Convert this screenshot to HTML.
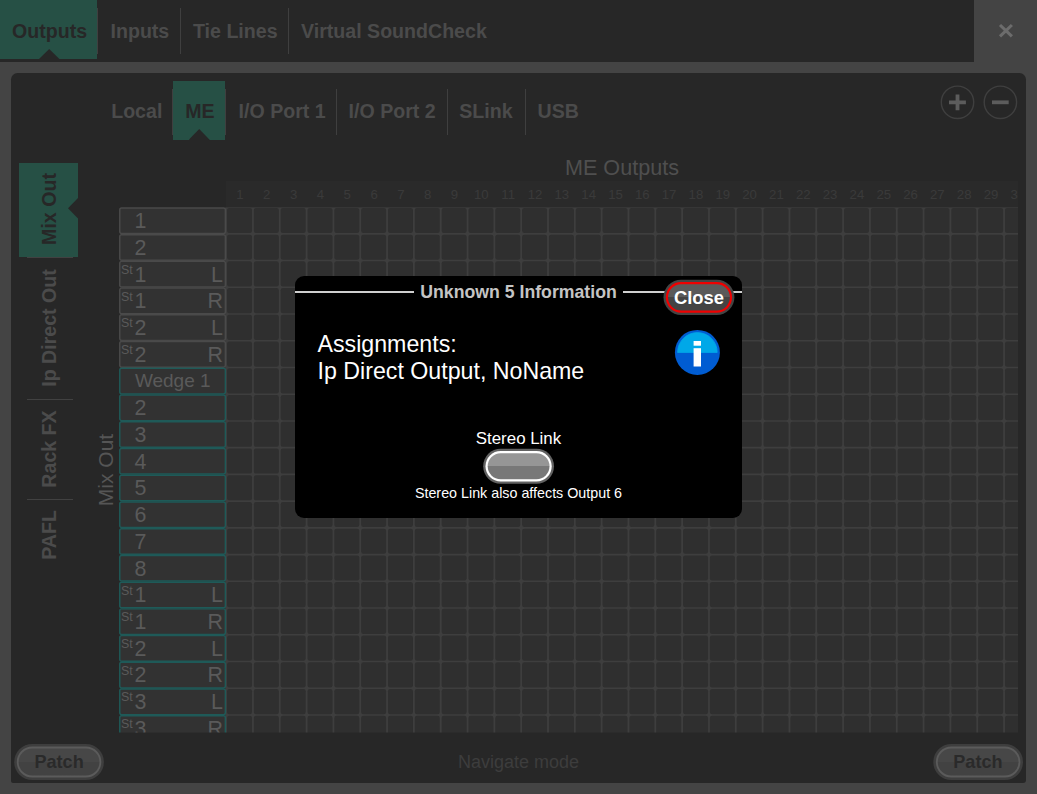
<!DOCTYPE html>
<html>
<head>
<meta charset="utf-8">
<title>I/O Patch</title>
<style>
html,body{margin:0;padding:0;}
body{width:1037px;height:794px;overflow:hidden;background:#444444;font-family:"Liberation Sans",sans-serif;position:relative;}
.abs{position:absolute;}
#nav{position:absolute;left:0;top:0;width:974px;height:62px;background:#272727;}
.tab{position:absolute;top:0;height:59px;line-height:62.2px;font-weight:bold;font-size:19.6px;color:#4b4b4b;white-space:nowrap;}
.tab.on{background:#265045;color:#272727;}
.vsep{position:absolute;width:1px;background:#3f3f3f;}
#panel{position:absolute;left:11px;top:73px;width:1015px;height:709.5px;background:#272727;border-radius:6.5px 6.5px 3px 2px;}
.stab{position:absolute;top:81px;height:58.6px;line-height:61.6px;font-weight:bold;font-size:19.6px;color:#4b4b4b;white-space:nowrap;}
.stab.on{background:#265045;color:#272727;}
.vt{position:absolute;left:19px;width:58.5px;font-weight:bold;font-size:19.6px;color:#4b4b4b;white-space:nowrap;}
.vt span{position:absolute;left:calc(50% + 1.0px);top:50%;transform:translate(-50%,-50%) rotate(-90deg);display:block;}
.vt.on{background:#265045;color:#272727;}
.hsep{position:absolute;height:1px;background:#414141;}
#gridclip{position:absolute;left:119px;top:181px;width:899px;height:552px;overflow:hidden;}
#hdr{position:absolute;left:107px;top:0;width:800px;height:26.4px;background:#2a2a2a;}
#gsvg{position:absolute;left:0;top:0;}
#modal{position:absolute;left:295px;top:276px;width:447px;height:241.5px;background:#000;border-radius:9px;color:#fff;}
.ptxt{top:744px;width:89.5px;height:35.6px;line-height:37.4px;text-align:center;font-weight:bold;font-size:18.1px;color:#2a2a2a;}
</style>
</head>
<body>
<div id="nav">
  <div class="tab on" style="left:0;width:97px;"><span style="margin-left:12px">Outputs</span>
    <svg class="abs" style="left:39px;top:49px" width="21" height="10"><path d="M0 10 L10.2 0 L20.4 10Z" fill="#272727"/></svg></div>
  <div class="vsep" style="left:97px;top:8px;height:46px;"></div>
  <div class="tab" style="left:110.5px;">Inputs</div>
  <div class="vsep" style="left:180px;top:8px;height:46px;"></div>
  <div class="tab" style="left:193px;">Tie Lines</div>
  <div class="vsep" style="left:288px;top:8px;height:46px;"></div>
  <div class="tab" style="left:301px;">Virtual SoundCheck</div>
</div>
<svg class="abs" style="left:996px;top:20px" width="20" height="20"><path d="M4 5 L15.9 16.4 M15.9 5 L4 16.4" stroke="#6c6c6c" stroke-width="3.1" fill="none"/></svg>

<div id="panel"></div>

<div class="stab" style="left:111.2px;">Local</div>
<div class="vsep" style="left:172.2px;top:89px;height:46px;"></div>
<div class="vsep" style="left:225px;top:89px;height:46px;"></div>
<div class="stab on" style="left:173.2px;width:50.4px;padding-left:1.5px;text-align:center;">ME
  <svg class="abs" style="left:16.3px;top:48.4px" width="21" height="12"><path d="M0 10.4 L10.2 0 L20.4 10.4 V12 H0Z" fill="#272727"/></svg></div>
<div class="stab" style="left:238.6px;">I/O Port 1</div>
<div class="vsep" style="left:336px;top:89px;height:46px;"></div>
<div class="stab" style="left:348.6px;">I/O Port 2</div>
<div class="vsep" style="left:447px;top:89px;height:46px;"></div>
<div class="stab" style="left:459.2px;">SLink</div>
<div class="vsep" style="left:525px;top:89px;height:46px;"></div>
<div class="stab" style="left:537.6px;">USB</div>

<svg class="abs" style="left:939px;top:84px" width="80" height="36">
  <circle cx="18.5" cy="18.3" r="16.2" fill="none" stroke="#3f3f3f" stroke-width="1.4"/>
  <path d="M10 18.3 H26.9 M18.5 10.4 V26.3" stroke="#5c5c5c" stroke-width="3.8" fill="none"/>
  <circle cx="61.4" cy="18.3" r="16.2" fill="none" stroke="#3f3f3f" stroke-width="1.4"/>
  <path d="M53 18.3 H69.7" stroke="#5c5c5c" stroke-width="3.8" fill="none"/>
</svg>

<div class="vt on" style="top:163px;height:94px;"><span style="top:calc(50% - 0.8px)">Mix Out</span>
  <svg class="abs" style="left:48.5px;top:35px" width="10" height="21"><path d="M10 0 L0 10.2 L10 20.4Z" fill="#272727"/></svg></div>
<div class="hsep" style="left:27px;top:257px;width:46px;"></div>
<div class="vt" style="top:257px;height:142px;"><span>Ip Direct Out</span></div>
<div class="hsep" style="left:27px;top:399px;width:46px;"></div>
<div class="vt" style="top:399px;height:100px;"><span>Rack FX</span></div>
<div class="hsep" style="left:27px;top:499px;width:46px;"></div>
<div class="vt" style="top:499px;height:72px;"><span>PAFL</span></div>

<div class="abs" style="left:105.5px;top:469.5px;width:0;height:0;"><span style="position:absolute;left:0;top:0;transform:translate(-50%,-50%) rotate(-90deg);white-space:nowrap;font-size:21px;color:#555555;">Mix Out</span></div>

<div class="abs" style="left:226px;top:155.4px;width:792px;text-align:center;font-size:21.6px;color:#4f4f4f;line-height:26px;">ME Outputs</div>

<div id="gridclip">
  <div id="hdr"></div>
  <svg id="gsvg" width="960" height="600" font-family="Liberation Sans, sans-serif" font-size="21.4" fill="#5a5a5a">
<rect x="106.22" y="26.30" width="900" height="600" fill="#3e3e3e"/>
<g fill="#2f2f2f">
<rect x="108.02" y="26.90" width="25.02" height="25.13" rx="2.2"/>
<rect x="134.84" y="26.90" width="25.02" height="25.13" rx="2.2"/>
<rect x="161.66" y="26.90" width="25.02" height="25.13" rx="2.2"/>
<rect x="188.49" y="26.90" width="25.02" height="25.13" rx="2.2"/>
<rect x="215.31" y="26.90" width="25.02" height="25.13" rx="2.2"/>
<rect x="242.14" y="26.90" width="25.02" height="25.13" rx="2.2"/>
<rect x="268.96" y="26.90" width="25.02" height="25.13" rx="2.2"/>
<rect x="295.79" y="26.90" width="25.02" height="25.13" rx="2.2"/>
<rect x="322.62" y="26.90" width="25.02" height="25.13" rx="2.2"/>
<rect x="349.44" y="26.90" width="25.02" height="25.13" rx="2.2"/>
<rect x="376.26" y="26.90" width="25.02" height="25.13" rx="2.2"/>
<rect x="403.09" y="26.90" width="25.02" height="25.13" rx="2.2"/>
<rect x="429.91" y="26.90" width="25.02" height="25.13" rx="2.2"/>
<rect x="456.74" y="26.90" width="25.02" height="25.13" rx="2.2"/>
<rect x="483.56" y="26.90" width="25.02" height="25.13" rx="2.2"/>
<rect x="510.39" y="26.90" width="25.02" height="25.13" rx="2.2"/>
<rect x="537.22" y="26.90" width="25.02" height="25.13" rx="2.2"/>
<rect x="564.04" y="26.90" width="25.02" height="25.13" rx="2.2"/>
<rect x="590.86" y="26.90" width="25.02" height="25.13" rx="2.2"/>
<rect x="617.69" y="26.90" width="25.02" height="25.13" rx="2.2"/>
<rect x="644.51" y="26.90" width="25.02" height="25.13" rx="2.2"/>
<rect x="671.34" y="26.90" width="25.02" height="25.13" rx="2.2"/>
<rect x="698.16" y="26.90" width="25.02" height="25.13" rx="2.2"/>
<rect x="724.99" y="26.90" width="25.02" height="25.13" rx="2.2"/>
<rect x="751.81" y="26.90" width="25.02" height="25.13" rx="2.2"/>
<rect x="778.64" y="26.90" width="25.02" height="25.13" rx="2.2"/>
<rect x="805.46" y="26.90" width="25.02" height="25.13" rx="2.2"/>
<rect x="832.29" y="26.90" width="25.02" height="25.13" rx="2.2"/>
<rect x="859.12" y="26.90" width="25.02" height="25.13" rx="2.2"/>
<rect x="885.94" y="26.90" width="25.02" height="25.13" rx="2.2"/>
<rect x="912.77" y="26.90" width="25.02" height="25.13" rx="2.2"/>
<rect x="108.02" y="53.63" width="25.02" height="25.13" rx="2.2"/>
<rect x="134.84" y="53.63" width="25.02" height="25.13" rx="2.2"/>
<rect x="161.66" y="53.63" width="25.02" height="25.13" rx="2.2"/>
<rect x="188.49" y="53.63" width="25.02" height="25.13" rx="2.2"/>
<rect x="215.31" y="53.63" width="25.02" height="25.13" rx="2.2"/>
<rect x="242.14" y="53.63" width="25.02" height="25.13" rx="2.2"/>
<rect x="268.96" y="53.63" width="25.02" height="25.13" rx="2.2"/>
<rect x="295.79" y="53.63" width="25.02" height="25.13" rx="2.2"/>
<rect x="322.62" y="53.63" width="25.02" height="25.13" rx="2.2"/>
<rect x="349.44" y="53.63" width="25.02" height="25.13" rx="2.2"/>
<rect x="376.26" y="53.63" width="25.02" height="25.13" rx="2.2"/>
<rect x="403.09" y="53.63" width="25.02" height="25.13" rx="2.2"/>
<rect x="429.91" y="53.63" width="25.02" height="25.13" rx="2.2"/>
<rect x="456.74" y="53.63" width="25.02" height="25.13" rx="2.2"/>
<rect x="483.56" y="53.63" width="25.02" height="25.13" rx="2.2"/>
<rect x="510.39" y="53.63" width="25.02" height="25.13" rx="2.2"/>
<rect x="537.22" y="53.63" width="25.02" height="25.13" rx="2.2"/>
<rect x="564.04" y="53.63" width="25.02" height="25.13" rx="2.2"/>
<rect x="590.86" y="53.63" width="25.02" height="25.13" rx="2.2"/>
<rect x="617.69" y="53.63" width="25.02" height="25.13" rx="2.2"/>
<rect x="644.51" y="53.63" width="25.02" height="25.13" rx="2.2"/>
<rect x="671.34" y="53.63" width="25.02" height="25.13" rx="2.2"/>
<rect x="698.16" y="53.63" width="25.02" height="25.13" rx="2.2"/>
<rect x="724.99" y="53.63" width="25.02" height="25.13" rx="2.2"/>
<rect x="751.81" y="53.63" width="25.02" height="25.13" rx="2.2"/>
<rect x="778.64" y="53.63" width="25.02" height="25.13" rx="2.2"/>
<rect x="805.46" y="53.63" width="25.02" height="25.13" rx="2.2"/>
<rect x="832.29" y="53.63" width="25.02" height="25.13" rx="2.2"/>
<rect x="859.12" y="53.63" width="25.02" height="25.13" rx="2.2"/>
<rect x="885.94" y="53.63" width="25.02" height="25.13" rx="2.2"/>
<rect x="912.77" y="53.63" width="25.02" height="25.13" rx="2.2"/>
<rect x="108.02" y="80.36" width="25.02" height="25.13" rx="2.2"/>
<rect x="134.84" y="80.36" width="25.02" height="25.13" rx="2.2"/>
<rect x="161.66" y="80.36" width="25.02" height="25.13" rx="2.2"/>
<rect x="188.49" y="80.36" width="25.02" height="25.13" rx="2.2"/>
<rect x="215.31" y="80.36" width="25.02" height="25.13" rx="2.2"/>
<rect x="242.14" y="80.36" width="25.02" height="25.13" rx="2.2"/>
<rect x="268.96" y="80.36" width="25.02" height="25.13" rx="2.2"/>
<rect x="295.79" y="80.36" width="25.02" height="25.13" rx="2.2"/>
<rect x="322.62" y="80.36" width="25.02" height="25.13" rx="2.2"/>
<rect x="349.44" y="80.36" width="25.02" height="25.13" rx="2.2"/>
<rect x="376.26" y="80.36" width="25.02" height="25.13" rx="2.2"/>
<rect x="403.09" y="80.36" width="25.02" height="25.13" rx="2.2"/>
<rect x="429.91" y="80.36" width="25.02" height="25.13" rx="2.2"/>
<rect x="456.74" y="80.36" width="25.02" height="25.13" rx="2.2"/>
<rect x="483.56" y="80.36" width="25.02" height="25.13" rx="2.2"/>
<rect x="510.39" y="80.36" width="25.02" height="25.13" rx="2.2"/>
<rect x="537.22" y="80.36" width="25.02" height="25.13" rx="2.2"/>
<rect x="564.04" y="80.36" width="25.02" height="25.13" rx="2.2"/>
<rect x="590.86" y="80.36" width="25.02" height="25.13" rx="2.2"/>
<rect x="617.69" y="80.36" width="25.02" height="25.13" rx="2.2"/>
<rect x="644.51" y="80.36" width="25.02" height="25.13" rx="2.2"/>
<rect x="671.34" y="80.36" width="25.02" height="25.13" rx="2.2"/>
<rect x="698.16" y="80.36" width="25.02" height="25.13" rx="2.2"/>
<rect x="724.99" y="80.36" width="25.02" height="25.13" rx="2.2"/>
<rect x="751.81" y="80.36" width="25.02" height="25.13" rx="2.2"/>
<rect x="778.64" y="80.36" width="25.02" height="25.13" rx="2.2"/>
<rect x="805.46" y="80.36" width="25.02" height="25.13" rx="2.2"/>
<rect x="832.29" y="80.36" width="25.02" height="25.13" rx="2.2"/>
<rect x="859.12" y="80.36" width="25.02" height="25.13" rx="2.2"/>
<rect x="885.94" y="80.36" width="25.02" height="25.13" rx="2.2"/>
<rect x="912.77" y="80.36" width="25.02" height="25.13" rx="2.2"/>
<rect x="108.02" y="107.09" width="25.02" height="25.13" rx="2.2"/>
<rect x="134.84" y="107.09" width="25.02" height="25.13" rx="2.2"/>
<rect x="161.66" y="107.09" width="25.02" height="25.13" rx="2.2"/>
<rect x="188.49" y="107.09" width="25.02" height="25.13" rx="2.2"/>
<rect x="215.31" y="107.09" width="25.02" height="25.13" rx="2.2"/>
<rect x="242.14" y="107.09" width="25.02" height="25.13" rx="2.2"/>
<rect x="268.96" y="107.09" width="25.02" height="25.13" rx="2.2"/>
<rect x="295.79" y="107.09" width="25.02" height="25.13" rx="2.2"/>
<rect x="322.62" y="107.09" width="25.02" height="25.13" rx="2.2"/>
<rect x="349.44" y="107.09" width="25.02" height="25.13" rx="2.2"/>
<rect x="376.26" y="107.09" width="25.02" height="25.13" rx="2.2"/>
<rect x="403.09" y="107.09" width="25.02" height="25.13" rx="2.2"/>
<rect x="429.91" y="107.09" width="25.02" height="25.13" rx="2.2"/>
<rect x="456.74" y="107.09" width="25.02" height="25.13" rx="2.2"/>
<rect x="483.56" y="107.09" width="25.02" height="25.13" rx="2.2"/>
<rect x="510.39" y="107.09" width="25.02" height="25.13" rx="2.2"/>
<rect x="537.22" y="107.09" width="25.02" height="25.13" rx="2.2"/>
<rect x="564.04" y="107.09" width="25.02" height="25.13" rx="2.2"/>
<rect x="590.86" y="107.09" width="25.02" height="25.13" rx="2.2"/>
<rect x="617.69" y="107.09" width="25.02" height="25.13" rx="2.2"/>
<rect x="644.51" y="107.09" width="25.02" height="25.13" rx="2.2"/>
<rect x="671.34" y="107.09" width="25.02" height="25.13" rx="2.2"/>
<rect x="698.16" y="107.09" width="25.02" height="25.13" rx="2.2"/>
<rect x="724.99" y="107.09" width="25.02" height="25.13" rx="2.2"/>
<rect x="751.81" y="107.09" width="25.02" height="25.13" rx="2.2"/>
<rect x="778.64" y="107.09" width="25.02" height="25.13" rx="2.2"/>
<rect x="805.46" y="107.09" width="25.02" height="25.13" rx="2.2"/>
<rect x="832.29" y="107.09" width="25.02" height="25.13" rx="2.2"/>
<rect x="859.12" y="107.09" width="25.02" height="25.13" rx="2.2"/>
<rect x="885.94" y="107.09" width="25.02" height="25.13" rx="2.2"/>
<rect x="912.77" y="107.09" width="25.02" height="25.13" rx="2.2"/>
<rect x="108.02" y="133.82" width="25.02" height="25.13" rx="2.2"/>
<rect x="134.84" y="133.82" width="25.02" height="25.13" rx="2.2"/>
<rect x="161.66" y="133.82" width="25.02" height="25.13" rx="2.2"/>
<rect x="188.49" y="133.82" width="25.02" height="25.13" rx="2.2"/>
<rect x="215.31" y="133.82" width="25.02" height="25.13" rx="2.2"/>
<rect x="242.14" y="133.82" width="25.02" height="25.13" rx="2.2"/>
<rect x="268.96" y="133.82" width="25.02" height="25.13" rx="2.2"/>
<rect x="295.79" y="133.82" width="25.02" height="25.13" rx="2.2"/>
<rect x="322.62" y="133.82" width="25.02" height="25.13" rx="2.2"/>
<rect x="349.44" y="133.82" width="25.02" height="25.13" rx="2.2"/>
<rect x="376.26" y="133.82" width="25.02" height="25.13" rx="2.2"/>
<rect x="403.09" y="133.82" width="25.02" height="25.13" rx="2.2"/>
<rect x="429.91" y="133.82" width="25.02" height="25.13" rx="2.2"/>
<rect x="456.74" y="133.82" width="25.02" height="25.13" rx="2.2"/>
<rect x="483.56" y="133.82" width="25.02" height="25.13" rx="2.2"/>
<rect x="510.39" y="133.82" width="25.02" height="25.13" rx="2.2"/>
<rect x="537.22" y="133.82" width="25.02" height="25.13" rx="2.2"/>
<rect x="564.04" y="133.82" width="25.02" height="25.13" rx="2.2"/>
<rect x="590.86" y="133.82" width="25.02" height="25.13" rx="2.2"/>
<rect x="617.69" y="133.82" width="25.02" height="25.13" rx="2.2"/>
<rect x="644.51" y="133.82" width="25.02" height="25.13" rx="2.2"/>
<rect x="671.34" y="133.82" width="25.02" height="25.13" rx="2.2"/>
<rect x="698.16" y="133.82" width="25.02" height="25.13" rx="2.2"/>
<rect x="724.99" y="133.82" width="25.02" height="25.13" rx="2.2"/>
<rect x="751.81" y="133.82" width="25.02" height="25.13" rx="2.2"/>
<rect x="778.64" y="133.82" width="25.02" height="25.13" rx="2.2"/>
<rect x="805.46" y="133.82" width="25.02" height="25.13" rx="2.2"/>
<rect x="832.29" y="133.82" width="25.02" height="25.13" rx="2.2"/>
<rect x="859.12" y="133.82" width="25.02" height="25.13" rx="2.2"/>
<rect x="885.94" y="133.82" width="25.02" height="25.13" rx="2.2"/>
<rect x="912.77" y="133.82" width="25.02" height="25.13" rx="2.2"/>
<rect x="108.02" y="160.55" width="25.02" height="25.13" rx="2.2"/>
<rect x="134.84" y="160.55" width="25.02" height="25.13" rx="2.2"/>
<rect x="161.66" y="160.55" width="25.02" height="25.13" rx="2.2"/>
<rect x="188.49" y="160.55" width="25.02" height="25.13" rx="2.2"/>
<rect x="215.31" y="160.55" width="25.02" height="25.13" rx="2.2"/>
<rect x="242.14" y="160.55" width="25.02" height="25.13" rx="2.2"/>
<rect x="268.96" y="160.55" width="25.02" height="25.13" rx="2.2"/>
<rect x="295.79" y="160.55" width="25.02" height="25.13" rx="2.2"/>
<rect x="322.62" y="160.55" width="25.02" height="25.13" rx="2.2"/>
<rect x="349.44" y="160.55" width="25.02" height="25.13" rx="2.2"/>
<rect x="376.26" y="160.55" width="25.02" height="25.13" rx="2.2"/>
<rect x="403.09" y="160.55" width="25.02" height="25.13" rx="2.2"/>
<rect x="429.91" y="160.55" width="25.02" height="25.13" rx="2.2"/>
<rect x="456.74" y="160.55" width="25.02" height="25.13" rx="2.2"/>
<rect x="483.56" y="160.55" width="25.02" height="25.13" rx="2.2"/>
<rect x="510.39" y="160.55" width="25.02" height="25.13" rx="2.2"/>
<rect x="537.22" y="160.55" width="25.02" height="25.13" rx="2.2"/>
<rect x="564.04" y="160.55" width="25.02" height="25.13" rx="2.2"/>
<rect x="590.86" y="160.55" width="25.02" height="25.13" rx="2.2"/>
<rect x="617.69" y="160.55" width="25.02" height="25.13" rx="2.2"/>
<rect x="644.51" y="160.55" width="25.02" height="25.13" rx="2.2"/>
<rect x="671.34" y="160.55" width="25.02" height="25.13" rx="2.2"/>
<rect x="698.16" y="160.55" width="25.02" height="25.13" rx="2.2"/>
<rect x="724.99" y="160.55" width="25.02" height="25.13" rx="2.2"/>
<rect x="751.81" y="160.55" width="25.02" height="25.13" rx="2.2"/>
<rect x="778.64" y="160.55" width="25.02" height="25.13" rx="2.2"/>
<rect x="805.46" y="160.55" width="25.02" height="25.13" rx="2.2"/>
<rect x="832.29" y="160.55" width="25.02" height="25.13" rx="2.2"/>
<rect x="859.12" y="160.55" width="25.02" height="25.13" rx="2.2"/>
<rect x="885.94" y="160.55" width="25.02" height="25.13" rx="2.2"/>
<rect x="912.77" y="160.55" width="25.02" height="25.13" rx="2.2"/>
<rect x="108.02" y="187.28" width="25.02" height="25.13" rx="2.2"/>
<rect x="134.84" y="187.28" width="25.02" height="25.13" rx="2.2"/>
<rect x="161.66" y="187.28" width="25.02" height="25.13" rx="2.2"/>
<rect x="188.49" y="187.28" width="25.02" height="25.13" rx="2.2"/>
<rect x="215.31" y="187.28" width="25.02" height="25.13" rx="2.2"/>
<rect x="242.14" y="187.28" width="25.02" height="25.13" rx="2.2"/>
<rect x="268.96" y="187.28" width="25.02" height="25.13" rx="2.2"/>
<rect x="295.79" y="187.28" width="25.02" height="25.13" rx="2.2"/>
<rect x="322.62" y="187.28" width="25.02" height="25.13" rx="2.2"/>
<rect x="349.44" y="187.28" width="25.02" height="25.13" rx="2.2"/>
<rect x="376.26" y="187.28" width="25.02" height="25.13" rx="2.2"/>
<rect x="403.09" y="187.28" width="25.02" height="25.13" rx="2.2"/>
<rect x="429.91" y="187.28" width="25.02" height="25.13" rx="2.2"/>
<rect x="456.74" y="187.28" width="25.02" height="25.13" rx="2.2"/>
<rect x="483.56" y="187.28" width="25.02" height="25.13" rx="2.2"/>
<rect x="510.39" y="187.28" width="25.02" height="25.13" rx="2.2"/>
<rect x="537.22" y="187.28" width="25.02" height="25.13" rx="2.2"/>
<rect x="564.04" y="187.28" width="25.02" height="25.13" rx="2.2"/>
<rect x="590.86" y="187.28" width="25.02" height="25.13" rx="2.2"/>
<rect x="617.69" y="187.28" width="25.02" height="25.13" rx="2.2"/>
<rect x="644.51" y="187.28" width="25.02" height="25.13" rx="2.2"/>
<rect x="671.34" y="187.28" width="25.02" height="25.13" rx="2.2"/>
<rect x="698.16" y="187.28" width="25.02" height="25.13" rx="2.2"/>
<rect x="724.99" y="187.28" width="25.02" height="25.13" rx="2.2"/>
<rect x="751.81" y="187.28" width="25.02" height="25.13" rx="2.2"/>
<rect x="778.64" y="187.28" width="25.02" height="25.13" rx="2.2"/>
<rect x="805.46" y="187.28" width="25.02" height="25.13" rx="2.2"/>
<rect x="832.29" y="187.28" width="25.02" height="25.13" rx="2.2"/>
<rect x="859.12" y="187.28" width="25.02" height="25.13" rx="2.2"/>
<rect x="885.94" y="187.28" width="25.02" height="25.13" rx="2.2"/>
<rect x="912.77" y="187.28" width="25.02" height="25.13" rx="2.2"/>
<rect x="108.02" y="214.01" width="25.02" height="25.13" rx="2.2"/>
<rect x="134.84" y="214.01" width="25.02" height="25.13" rx="2.2"/>
<rect x="161.66" y="214.01" width="25.02" height="25.13" rx="2.2"/>
<rect x="188.49" y="214.01" width="25.02" height="25.13" rx="2.2"/>
<rect x="215.31" y="214.01" width="25.02" height="25.13" rx="2.2"/>
<rect x="242.14" y="214.01" width="25.02" height="25.13" rx="2.2"/>
<rect x="268.96" y="214.01" width="25.02" height="25.13" rx="2.2"/>
<rect x="295.79" y="214.01" width="25.02" height="25.13" rx="2.2"/>
<rect x="322.62" y="214.01" width="25.02" height="25.13" rx="2.2"/>
<rect x="349.44" y="214.01" width="25.02" height="25.13" rx="2.2"/>
<rect x="376.26" y="214.01" width="25.02" height="25.13" rx="2.2"/>
<rect x="403.09" y="214.01" width="25.02" height="25.13" rx="2.2"/>
<rect x="429.91" y="214.01" width="25.02" height="25.13" rx="2.2"/>
<rect x="456.74" y="214.01" width="25.02" height="25.13" rx="2.2"/>
<rect x="483.56" y="214.01" width="25.02" height="25.13" rx="2.2"/>
<rect x="510.39" y="214.01" width="25.02" height="25.13" rx="2.2"/>
<rect x="537.22" y="214.01" width="25.02" height="25.13" rx="2.2"/>
<rect x="564.04" y="214.01" width="25.02" height="25.13" rx="2.2"/>
<rect x="590.86" y="214.01" width="25.02" height="25.13" rx="2.2"/>
<rect x="617.69" y="214.01" width="25.02" height="25.13" rx="2.2"/>
<rect x="644.51" y="214.01" width="25.02" height="25.13" rx="2.2"/>
<rect x="671.34" y="214.01" width="25.02" height="25.13" rx="2.2"/>
<rect x="698.16" y="214.01" width="25.02" height="25.13" rx="2.2"/>
<rect x="724.99" y="214.01" width="25.02" height="25.13" rx="2.2"/>
<rect x="751.81" y="214.01" width="25.02" height="25.13" rx="2.2"/>
<rect x="778.64" y="214.01" width="25.02" height="25.13" rx="2.2"/>
<rect x="805.46" y="214.01" width="25.02" height="25.13" rx="2.2"/>
<rect x="832.29" y="214.01" width="25.02" height="25.13" rx="2.2"/>
<rect x="859.12" y="214.01" width="25.02" height="25.13" rx="2.2"/>
<rect x="885.94" y="214.01" width="25.02" height="25.13" rx="2.2"/>
<rect x="912.77" y="214.01" width="25.02" height="25.13" rx="2.2"/>
<rect x="108.02" y="240.74" width="25.02" height="25.13" rx="2.2"/>
<rect x="134.84" y="240.74" width="25.02" height="25.13" rx="2.2"/>
<rect x="161.66" y="240.74" width="25.02" height="25.13" rx="2.2"/>
<rect x="188.49" y="240.74" width="25.02" height="25.13" rx="2.2"/>
<rect x="215.31" y="240.74" width="25.02" height="25.13" rx="2.2"/>
<rect x="242.14" y="240.74" width="25.02" height="25.13" rx="2.2"/>
<rect x="268.96" y="240.74" width="25.02" height="25.13" rx="2.2"/>
<rect x="295.79" y="240.74" width="25.02" height="25.13" rx="2.2"/>
<rect x="322.62" y="240.74" width="25.02" height="25.13" rx="2.2"/>
<rect x="349.44" y="240.74" width="25.02" height="25.13" rx="2.2"/>
<rect x="376.26" y="240.74" width="25.02" height="25.13" rx="2.2"/>
<rect x="403.09" y="240.74" width="25.02" height="25.13" rx="2.2"/>
<rect x="429.91" y="240.74" width="25.02" height="25.13" rx="2.2"/>
<rect x="456.74" y="240.74" width="25.02" height="25.13" rx="2.2"/>
<rect x="483.56" y="240.74" width="25.02" height="25.13" rx="2.2"/>
<rect x="510.39" y="240.74" width="25.02" height="25.13" rx="2.2"/>
<rect x="537.22" y="240.74" width="25.02" height="25.13" rx="2.2"/>
<rect x="564.04" y="240.74" width="25.02" height="25.13" rx="2.2"/>
<rect x="590.86" y="240.74" width="25.02" height="25.13" rx="2.2"/>
<rect x="617.69" y="240.74" width="25.02" height="25.13" rx="2.2"/>
<rect x="644.51" y="240.74" width="25.02" height="25.13" rx="2.2"/>
<rect x="671.34" y="240.74" width="25.02" height="25.13" rx="2.2"/>
<rect x="698.16" y="240.74" width="25.02" height="25.13" rx="2.2"/>
<rect x="724.99" y="240.74" width="25.02" height="25.13" rx="2.2"/>
<rect x="751.81" y="240.74" width="25.02" height="25.13" rx="2.2"/>
<rect x="778.64" y="240.74" width="25.02" height="25.13" rx="2.2"/>
<rect x="805.46" y="240.74" width="25.02" height="25.13" rx="2.2"/>
<rect x="832.29" y="240.74" width="25.02" height="25.13" rx="2.2"/>
<rect x="859.12" y="240.74" width="25.02" height="25.13" rx="2.2"/>
<rect x="885.94" y="240.74" width="25.02" height="25.13" rx="2.2"/>
<rect x="912.77" y="240.74" width="25.02" height="25.13" rx="2.2"/>
<rect x="108.02" y="267.47" width="25.02" height="25.13" rx="2.2"/>
<rect x="134.84" y="267.47" width="25.02" height="25.13" rx="2.2"/>
<rect x="161.66" y="267.47" width="25.02" height="25.13" rx="2.2"/>
<rect x="188.49" y="267.47" width="25.02" height="25.13" rx="2.2"/>
<rect x="215.31" y="267.47" width="25.02" height="25.13" rx="2.2"/>
<rect x="242.14" y="267.47" width="25.02" height="25.13" rx="2.2"/>
<rect x="268.96" y="267.47" width="25.02" height="25.13" rx="2.2"/>
<rect x="295.79" y="267.47" width="25.02" height="25.13" rx="2.2"/>
<rect x="322.62" y="267.47" width="25.02" height="25.13" rx="2.2"/>
<rect x="349.44" y="267.47" width="25.02" height="25.13" rx="2.2"/>
<rect x="376.26" y="267.47" width="25.02" height="25.13" rx="2.2"/>
<rect x="403.09" y="267.47" width="25.02" height="25.13" rx="2.2"/>
<rect x="429.91" y="267.47" width="25.02" height="25.13" rx="2.2"/>
<rect x="456.74" y="267.47" width="25.02" height="25.13" rx="2.2"/>
<rect x="483.56" y="267.47" width="25.02" height="25.13" rx="2.2"/>
<rect x="510.39" y="267.47" width="25.02" height="25.13" rx="2.2"/>
<rect x="537.22" y="267.47" width="25.02" height="25.13" rx="2.2"/>
<rect x="564.04" y="267.47" width="25.02" height="25.13" rx="2.2"/>
<rect x="590.86" y="267.47" width="25.02" height="25.13" rx="2.2"/>
<rect x="617.69" y="267.47" width="25.02" height="25.13" rx="2.2"/>
<rect x="644.51" y="267.47" width="25.02" height="25.13" rx="2.2"/>
<rect x="671.34" y="267.47" width="25.02" height="25.13" rx="2.2"/>
<rect x="698.16" y="267.47" width="25.02" height="25.13" rx="2.2"/>
<rect x="724.99" y="267.47" width="25.02" height="25.13" rx="2.2"/>
<rect x="751.81" y="267.47" width="25.02" height="25.13" rx="2.2"/>
<rect x="778.64" y="267.47" width="25.02" height="25.13" rx="2.2"/>
<rect x="805.46" y="267.47" width="25.02" height="25.13" rx="2.2"/>
<rect x="832.29" y="267.47" width="25.02" height="25.13" rx="2.2"/>
<rect x="859.12" y="267.47" width="25.02" height="25.13" rx="2.2"/>
<rect x="885.94" y="267.47" width="25.02" height="25.13" rx="2.2"/>
<rect x="912.77" y="267.47" width="25.02" height="25.13" rx="2.2"/>
<rect x="108.02" y="294.20" width="25.02" height="25.13" rx="2.2"/>
<rect x="134.84" y="294.20" width="25.02" height="25.13" rx="2.2"/>
<rect x="161.66" y="294.20" width="25.02" height="25.13" rx="2.2"/>
<rect x="188.49" y="294.20" width="25.02" height="25.13" rx="2.2"/>
<rect x="215.31" y="294.20" width="25.02" height="25.13" rx="2.2"/>
<rect x="242.14" y="294.20" width="25.02" height="25.13" rx="2.2"/>
<rect x="268.96" y="294.20" width="25.02" height="25.13" rx="2.2"/>
<rect x="295.79" y="294.20" width="25.02" height="25.13" rx="2.2"/>
<rect x="322.62" y="294.20" width="25.02" height="25.13" rx="2.2"/>
<rect x="349.44" y="294.20" width="25.02" height="25.13" rx="2.2"/>
<rect x="376.26" y="294.20" width="25.02" height="25.13" rx="2.2"/>
<rect x="403.09" y="294.20" width="25.02" height="25.13" rx="2.2"/>
<rect x="429.91" y="294.20" width="25.02" height="25.13" rx="2.2"/>
<rect x="456.74" y="294.20" width="25.02" height="25.13" rx="2.2"/>
<rect x="483.56" y="294.20" width="25.02" height="25.13" rx="2.2"/>
<rect x="510.39" y="294.20" width="25.02" height="25.13" rx="2.2"/>
<rect x="537.22" y="294.20" width="25.02" height="25.13" rx="2.2"/>
<rect x="564.04" y="294.20" width="25.02" height="25.13" rx="2.2"/>
<rect x="590.86" y="294.20" width="25.02" height="25.13" rx="2.2"/>
<rect x="617.69" y="294.20" width="25.02" height="25.13" rx="2.2"/>
<rect x="644.51" y="294.20" width="25.02" height="25.13" rx="2.2"/>
<rect x="671.34" y="294.20" width="25.02" height="25.13" rx="2.2"/>
<rect x="698.16" y="294.20" width="25.02" height="25.13" rx="2.2"/>
<rect x="724.99" y="294.20" width="25.02" height="25.13" rx="2.2"/>
<rect x="751.81" y="294.20" width="25.02" height="25.13" rx="2.2"/>
<rect x="778.64" y="294.20" width="25.02" height="25.13" rx="2.2"/>
<rect x="805.46" y="294.20" width="25.02" height="25.13" rx="2.2"/>
<rect x="832.29" y="294.20" width="25.02" height="25.13" rx="2.2"/>
<rect x="859.12" y="294.20" width="25.02" height="25.13" rx="2.2"/>
<rect x="885.94" y="294.20" width="25.02" height="25.13" rx="2.2"/>
<rect x="912.77" y="294.20" width="25.02" height="25.13" rx="2.2"/>
<rect x="108.02" y="320.93" width="25.02" height="25.13" rx="2.2"/>
<rect x="134.84" y="320.93" width="25.02" height="25.13" rx="2.2"/>
<rect x="161.66" y="320.93" width="25.02" height="25.13" rx="2.2"/>
<rect x="188.49" y="320.93" width="25.02" height="25.13" rx="2.2"/>
<rect x="215.31" y="320.93" width="25.02" height="25.13" rx="2.2"/>
<rect x="242.14" y="320.93" width="25.02" height="25.13" rx="2.2"/>
<rect x="268.96" y="320.93" width="25.02" height="25.13" rx="2.2"/>
<rect x="295.79" y="320.93" width="25.02" height="25.13" rx="2.2"/>
<rect x="322.62" y="320.93" width="25.02" height="25.13" rx="2.2"/>
<rect x="349.44" y="320.93" width="25.02" height="25.13" rx="2.2"/>
<rect x="376.26" y="320.93" width="25.02" height="25.13" rx="2.2"/>
<rect x="403.09" y="320.93" width="25.02" height="25.13" rx="2.2"/>
<rect x="429.91" y="320.93" width="25.02" height="25.13" rx="2.2"/>
<rect x="456.74" y="320.93" width="25.02" height="25.13" rx="2.2"/>
<rect x="483.56" y="320.93" width="25.02" height="25.13" rx="2.2"/>
<rect x="510.39" y="320.93" width="25.02" height="25.13" rx="2.2"/>
<rect x="537.22" y="320.93" width="25.02" height="25.13" rx="2.2"/>
<rect x="564.04" y="320.93" width="25.02" height="25.13" rx="2.2"/>
<rect x="590.86" y="320.93" width="25.02" height="25.13" rx="2.2"/>
<rect x="617.69" y="320.93" width="25.02" height="25.13" rx="2.2"/>
<rect x="644.51" y="320.93" width="25.02" height="25.13" rx="2.2"/>
<rect x="671.34" y="320.93" width="25.02" height="25.13" rx="2.2"/>
<rect x="698.16" y="320.93" width="25.02" height="25.13" rx="2.2"/>
<rect x="724.99" y="320.93" width="25.02" height="25.13" rx="2.2"/>
<rect x="751.81" y="320.93" width="25.02" height="25.13" rx="2.2"/>
<rect x="778.64" y="320.93" width="25.02" height="25.13" rx="2.2"/>
<rect x="805.46" y="320.93" width="25.02" height="25.13" rx="2.2"/>
<rect x="832.29" y="320.93" width="25.02" height="25.13" rx="2.2"/>
<rect x="859.12" y="320.93" width="25.02" height="25.13" rx="2.2"/>
<rect x="885.94" y="320.93" width="25.02" height="25.13" rx="2.2"/>
<rect x="912.77" y="320.93" width="25.02" height="25.13" rx="2.2"/>
<rect x="108.02" y="347.66" width="25.02" height="25.13" rx="2.2"/>
<rect x="134.84" y="347.66" width="25.02" height="25.13" rx="2.2"/>
<rect x="161.66" y="347.66" width="25.02" height="25.13" rx="2.2"/>
<rect x="188.49" y="347.66" width="25.02" height="25.13" rx="2.2"/>
<rect x="215.31" y="347.66" width="25.02" height="25.13" rx="2.2"/>
<rect x="242.14" y="347.66" width="25.02" height="25.13" rx="2.2"/>
<rect x="268.96" y="347.66" width="25.02" height="25.13" rx="2.2"/>
<rect x="295.79" y="347.66" width="25.02" height="25.13" rx="2.2"/>
<rect x="322.62" y="347.66" width="25.02" height="25.13" rx="2.2"/>
<rect x="349.44" y="347.66" width="25.02" height="25.13" rx="2.2"/>
<rect x="376.26" y="347.66" width="25.02" height="25.13" rx="2.2"/>
<rect x="403.09" y="347.66" width="25.02" height="25.13" rx="2.2"/>
<rect x="429.91" y="347.66" width="25.02" height="25.13" rx="2.2"/>
<rect x="456.74" y="347.66" width="25.02" height="25.13" rx="2.2"/>
<rect x="483.56" y="347.66" width="25.02" height="25.13" rx="2.2"/>
<rect x="510.39" y="347.66" width="25.02" height="25.13" rx="2.2"/>
<rect x="537.22" y="347.66" width="25.02" height="25.13" rx="2.2"/>
<rect x="564.04" y="347.66" width="25.02" height="25.13" rx="2.2"/>
<rect x="590.86" y="347.66" width="25.02" height="25.13" rx="2.2"/>
<rect x="617.69" y="347.66" width="25.02" height="25.13" rx="2.2"/>
<rect x="644.51" y="347.66" width="25.02" height="25.13" rx="2.2"/>
<rect x="671.34" y="347.66" width="25.02" height="25.13" rx="2.2"/>
<rect x="698.16" y="347.66" width="25.02" height="25.13" rx="2.2"/>
<rect x="724.99" y="347.66" width="25.02" height="25.13" rx="2.2"/>
<rect x="751.81" y="347.66" width="25.02" height="25.13" rx="2.2"/>
<rect x="778.64" y="347.66" width="25.02" height="25.13" rx="2.2"/>
<rect x="805.46" y="347.66" width="25.02" height="25.13" rx="2.2"/>
<rect x="832.29" y="347.66" width="25.02" height="25.13" rx="2.2"/>
<rect x="859.12" y="347.66" width="25.02" height="25.13" rx="2.2"/>
<rect x="885.94" y="347.66" width="25.02" height="25.13" rx="2.2"/>
<rect x="912.77" y="347.66" width="25.02" height="25.13" rx="2.2"/>
<rect x="108.02" y="374.39" width="25.02" height="25.13" rx="2.2"/>
<rect x="134.84" y="374.39" width="25.02" height="25.13" rx="2.2"/>
<rect x="161.66" y="374.39" width="25.02" height="25.13" rx="2.2"/>
<rect x="188.49" y="374.39" width="25.02" height="25.13" rx="2.2"/>
<rect x="215.31" y="374.39" width="25.02" height="25.13" rx="2.2"/>
<rect x="242.14" y="374.39" width="25.02" height="25.13" rx="2.2"/>
<rect x="268.96" y="374.39" width="25.02" height="25.13" rx="2.2"/>
<rect x="295.79" y="374.39" width="25.02" height="25.13" rx="2.2"/>
<rect x="322.62" y="374.39" width="25.02" height="25.13" rx="2.2"/>
<rect x="349.44" y="374.39" width="25.02" height="25.13" rx="2.2"/>
<rect x="376.26" y="374.39" width="25.02" height="25.13" rx="2.2"/>
<rect x="403.09" y="374.39" width="25.02" height="25.13" rx="2.2"/>
<rect x="429.91" y="374.39" width="25.02" height="25.13" rx="2.2"/>
<rect x="456.74" y="374.39" width="25.02" height="25.13" rx="2.2"/>
<rect x="483.56" y="374.39" width="25.02" height="25.13" rx="2.2"/>
<rect x="510.39" y="374.39" width="25.02" height="25.13" rx="2.2"/>
<rect x="537.22" y="374.39" width="25.02" height="25.13" rx="2.2"/>
<rect x="564.04" y="374.39" width="25.02" height="25.13" rx="2.2"/>
<rect x="590.86" y="374.39" width="25.02" height="25.13" rx="2.2"/>
<rect x="617.69" y="374.39" width="25.02" height="25.13" rx="2.2"/>
<rect x="644.51" y="374.39" width="25.02" height="25.13" rx="2.2"/>
<rect x="671.34" y="374.39" width="25.02" height="25.13" rx="2.2"/>
<rect x="698.16" y="374.39" width="25.02" height="25.13" rx="2.2"/>
<rect x="724.99" y="374.39" width="25.02" height="25.13" rx="2.2"/>
<rect x="751.81" y="374.39" width="25.02" height="25.13" rx="2.2"/>
<rect x="778.64" y="374.39" width="25.02" height="25.13" rx="2.2"/>
<rect x="805.46" y="374.39" width="25.02" height="25.13" rx="2.2"/>
<rect x="832.29" y="374.39" width="25.02" height="25.13" rx="2.2"/>
<rect x="859.12" y="374.39" width="25.02" height="25.13" rx="2.2"/>
<rect x="885.94" y="374.39" width="25.02" height="25.13" rx="2.2"/>
<rect x="912.77" y="374.39" width="25.02" height="25.13" rx="2.2"/>
<rect x="108.02" y="401.12" width="25.02" height="25.13" rx="2.2"/>
<rect x="134.84" y="401.12" width="25.02" height="25.13" rx="2.2"/>
<rect x="161.66" y="401.12" width="25.02" height="25.13" rx="2.2"/>
<rect x="188.49" y="401.12" width="25.02" height="25.13" rx="2.2"/>
<rect x="215.31" y="401.12" width="25.02" height="25.13" rx="2.2"/>
<rect x="242.14" y="401.12" width="25.02" height="25.13" rx="2.2"/>
<rect x="268.96" y="401.12" width="25.02" height="25.13" rx="2.2"/>
<rect x="295.79" y="401.12" width="25.02" height="25.13" rx="2.2"/>
<rect x="322.62" y="401.12" width="25.02" height="25.13" rx="2.2"/>
<rect x="349.44" y="401.12" width="25.02" height="25.13" rx="2.2"/>
<rect x="376.26" y="401.12" width="25.02" height="25.13" rx="2.2"/>
<rect x="403.09" y="401.12" width="25.02" height="25.13" rx="2.2"/>
<rect x="429.91" y="401.12" width="25.02" height="25.13" rx="2.2"/>
<rect x="456.74" y="401.12" width="25.02" height="25.13" rx="2.2"/>
<rect x="483.56" y="401.12" width="25.02" height="25.13" rx="2.2"/>
<rect x="510.39" y="401.12" width="25.02" height="25.13" rx="2.2"/>
<rect x="537.22" y="401.12" width="25.02" height="25.13" rx="2.2"/>
<rect x="564.04" y="401.12" width="25.02" height="25.13" rx="2.2"/>
<rect x="590.86" y="401.12" width="25.02" height="25.13" rx="2.2"/>
<rect x="617.69" y="401.12" width="25.02" height="25.13" rx="2.2"/>
<rect x="644.51" y="401.12" width="25.02" height="25.13" rx="2.2"/>
<rect x="671.34" y="401.12" width="25.02" height="25.13" rx="2.2"/>
<rect x="698.16" y="401.12" width="25.02" height="25.13" rx="2.2"/>
<rect x="724.99" y="401.12" width="25.02" height="25.13" rx="2.2"/>
<rect x="751.81" y="401.12" width="25.02" height="25.13" rx="2.2"/>
<rect x="778.64" y="401.12" width="25.02" height="25.13" rx="2.2"/>
<rect x="805.46" y="401.12" width="25.02" height="25.13" rx="2.2"/>
<rect x="832.29" y="401.12" width="25.02" height="25.13" rx="2.2"/>
<rect x="859.12" y="401.12" width="25.02" height="25.13" rx="2.2"/>
<rect x="885.94" y="401.12" width="25.02" height="25.13" rx="2.2"/>
<rect x="912.77" y="401.12" width="25.02" height="25.13" rx="2.2"/>
<rect x="108.02" y="427.85" width="25.02" height="25.13" rx="2.2"/>
<rect x="134.84" y="427.85" width="25.02" height="25.13" rx="2.2"/>
<rect x="161.66" y="427.85" width="25.02" height="25.13" rx="2.2"/>
<rect x="188.49" y="427.85" width="25.02" height="25.13" rx="2.2"/>
<rect x="215.31" y="427.85" width="25.02" height="25.13" rx="2.2"/>
<rect x="242.14" y="427.85" width="25.02" height="25.13" rx="2.2"/>
<rect x="268.96" y="427.85" width="25.02" height="25.13" rx="2.2"/>
<rect x="295.79" y="427.85" width="25.02" height="25.13" rx="2.2"/>
<rect x="322.62" y="427.85" width="25.02" height="25.13" rx="2.2"/>
<rect x="349.44" y="427.85" width="25.02" height="25.13" rx="2.2"/>
<rect x="376.26" y="427.85" width="25.02" height="25.13" rx="2.2"/>
<rect x="403.09" y="427.85" width="25.02" height="25.13" rx="2.2"/>
<rect x="429.91" y="427.85" width="25.02" height="25.13" rx="2.2"/>
<rect x="456.74" y="427.85" width="25.02" height="25.13" rx="2.2"/>
<rect x="483.56" y="427.85" width="25.02" height="25.13" rx="2.2"/>
<rect x="510.39" y="427.85" width="25.02" height="25.13" rx="2.2"/>
<rect x="537.22" y="427.85" width="25.02" height="25.13" rx="2.2"/>
<rect x="564.04" y="427.85" width="25.02" height="25.13" rx="2.2"/>
<rect x="590.86" y="427.85" width="25.02" height="25.13" rx="2.2"/>
<rect x="617.69" y="427.85" width="25.02" height="25.13" rx="2.2"/>
<rect x="644.51" y="427.85" width="25.02" height="25.13" rx="2.2"/>
<rect x="671.34" y="427.85" width="25.02" height="25.13" rx="2.2"/>
<rect x="698.16" y="427.85" width="25.02" height="25.13" rx="2.2"/>
<rect x="724.99" y="427.85" width="25.02" height="25.13" rx="2.2"/>
<rect x="751.81" y="427.85" width="25.02" height="25.13" rx="2.2"/>
<rect x="778.64" y="427.85" width="25.02" height="25.13" rx="2.2"/>
<rect x="805.46" y="427.85" width="25.02" height="25.13" rx="2.2"/>
<rect x="832.29" y="427.85" width="25.02" height="25.13" rx="2.2"/>
<rect x="859.12" y="427.85" width="25.02" height="25.13" rx="2.2"/>
<rect x="885.94" y="427.85" width="25.02" height="25.13" rx="2.2"/>
<rect x="912.77" y="427.85" width="25.02" height="25.13" rx="2.2"/>
<rect x="108.02" y="454.58" width="25.02" height="25.13" rx="2.2"/>
<rect x="134.84" y="454.58" width="25.02" height="25.13" rx="2.2"/>
<rect x="161.66" y="454.58" width="25.02" height="25.13" rx="2.2"/>
<rect x="188.49" y="454.58" width="25.02" height="25.13" rx="2.2"/>
<rect x="215.31" y="454.58" width="25.02" height="25.13" rx="2.2"/>
<rect x="242.14" y="454.58" width="25.02" height="25.13" rx="2.2"/>
<rect x="268.96" y="454.58" width="25.02" height="25.13" rx="2.2"/>
<rect x="295.79" y="454.58" width="25.02" height="25.13" rx="2.2"/>
<rect x="322.62" y="454.58" width="25.02" height="25.13" rx="2.2"/>
<rect x="349.44" y="454.58" width="25.02" height="25.13" rx="2.2"/>
<rect x="376.26" y="454.58" width="25.02" height="25.13" rx="2.2"/>
<rect x="403.09" y="454.58" width="25.02" height="25.13" rx="2.2"/>
<rect x="429.91" y="454.58" width="25.02" height="25.13" rx="2.2"/>
<rect x="456.74" y="454.58" width="25.02" height="25.13" rx="2.2"/>
<rect x="483.56" y="454.58" width="25.02" height="25.13" rx="2.2"/>
<rect x="510.39" y="454.58" width="25.02" height="25.13" rx="2.2"/>
<rect x="537.22" y="454.58" width="25.02" height="25.13" rx="2.2"/>
<rect x="564.04" y="454.58" width="25.02" height="25.13" rx="2.2"/>
<rect x="590.86" y="454.58" width="25.02" height="25.13" rx="2.2"/>
<rect x="617.69" y="454.58" width="25.02" height="25.13" rx="2.2"/>
<rect x="644.51" y="454.58" width="25.02" height="25.13" rx="2.2"/>
<rect x="671.34" y="454.58" width="25.02" height="25.13" rx="2.2"/>
<rect x="698.16" y="454.58" width="25.02" height="25.13" rx="2.2"/>
<rect x="724.99" y="454.58" width="25.02" height="25.13" rx="2.2"/>
<rect x="751.81" y="454.58" width="25.02" height="25.13" rx="2.2"/>
<rect x="778.64" y="454.58" width="25.02" height="25.13" rx="2.2"/>
<rect x="805.46" y="454.58" width="25.02" height="25.13" rx="2.2"/>
<rect x="832.29" y="454.58" width="25.02" height="25.13" rx="2.2"/>
<rect x="859.12" y="454.58" width="25.02" height="25.13" rx="2.2"/>
<rect x="885.94" y="454.58" width="25.02" height="25.13" rx="2.2"/>
<rect x="912.77" y="454.58" width="25.02" height="25.13" rx="2.2"/>
<rect x="108.02" y="481.31" width="25.02" height="25.13" rx="2.2"/>
<rect x="134.84" y="481.31" width="25.02" height="25.13" rx="2.2"/>
<rect x="161.66" y="481.31" width="25.02" height="25.13" rx="2.2"/>
<rect x="188.49" y="481.31" width="25.02" height="25.13" rx="2.2"/>
<rect x="215.31" y="481.31" width="25.02" height="25.13" rx="2.2"/>
<rect x="242.14" y="481.31" width="25.02" height="25.13" rx="2.2"/>
<rect x="268.96" y="481.31" width="25.02" height="25.13" rx="2.2"/>
<rect x="295.79" y="481.31" width="25.02" height="25.13" rx="2.2"/>
<rect x="322.62" y="481.31" width="25.02" height="25.13" rx="2.2"/>
<rect x="349.44" y="481.31" width="25.02" height="25.13" rx="2.2"/>
<rect x="376.26" y="481.31" width="25.02" height="25.13" rx="2.2"/>
<rect x="403.09" y="481.31" width="25.02" height="25.13" rx="2.2"/>
<rect x="429.91" y="481.31" width="25.02" height="25.13" rx="2.2"/>
<rect x="456.74" y="481.31" width="25.02" height="25.13" rx="2.2"/>
<rect x="483.56" y="481.31" width="25.02" height="25.13" rx="2.2"/>
<rect x="510.39" y="481.31" width="25.02" height="25.13" rx="2.2"/>
<rect x="537.22" y="481.31" width="25.02" height="25.13" rx="2.2"/>
<rect x="564.04" y="481.31" width="25.02" height="25.13" rx="2.2"/>
<rect x="590.86" y="481.31" width="25.02" height="25.13" rx="2.2"/>
<rect x="617.69" y="481.31" width="25.02" height="25.13" rx="2.2"/>
<rect x="644.51" y="481.31" width="25.02" height="25.13" rx="2.2"/>
<rect x="671.34" y="481.31" width="25.02" height="25.13" rx="2.2"/>
<rect x="698.16" y="481.31" width="25.02" height="25.13" rx="2.2"/>
<rect x="724.99" y="481.31" width="25.02" height="25.13" rx="2.2"/>
<rect x="751.81" y="481.31" width="25.02" height="25.13" rx="2.2"/>
<rect x="778.64" y="481.31" width="25.02" height="25.13" rx="2.2"/>
<rect x="805.46" y="481.31" width="25.02" height="25.13" rx="2.2"/>
<rect x="832.29" y="481.31" width="25.02" height="25.13" rx="2.2"/>
<rect x="859.12" y="481.31" width="25.02" height="25.13" rx="2.2"/>
<rect x="885.94" y="481.31" width="25.02" height="25.13" rx="2.2"/>
<rect x="912.77" y="481.31" width="25.02" height="25.13" rx="2.2"/>
<rect x="108.02" y="508.04" width="25.02" height="25.13" rx="2.2"/>
<rect x="134.84" y="508.04" width="25.02" height="25.13" rx="2.2"/>
<rect x="161.66" y="508.04" width="25.02" height="25.13" rx="2.2"/>
<rect x="188.49" y="508.04" width="25.02" height="25.13" rx="2.2"/>
<rect x="215.31" y="508.04" width="25.02" height="25.13" rx="2.2"/>
<rect x="242.14" y="508.04" width="25.02" height="25.13" rx="2.2"/>
<rect x="268.96" y="508.04" width="25.02" height="25.13" rx="2.2"/>
<rect x="295.79" y="508.04" width="25.02" height="25.13" rx="2.2"/>
<rect x="322.62" y="508.04" width="25.02" height="25.13" rx="2.2"/>
<rect x="349.44" y="508.04" width="25.02" height="25.13" rx="2.2"/>
<rect x="376.26" y="508.04" width="25.02" height="25.13" rx="2.2"/>
<rect x="403.09" y="508.04" width="25.02" height="25.13" rx="2.2"/>
<rect x="429.91" y="508.04" width="25.02" height="25.13" rx="2.2"/>
<rect x="456.74" y="508.04" width="25.02" height="25.13" rx="2.2"/>
<rect x="483.56" y="508.04" width="25.02" height="25.13" rx="2.2"/>
<rect x="510.39" y="508.04" width="25.02" height="25.13" rx="2.2"/>
<rect x="537.22" y="508.04" width="25.02" height="25.13" rx="2.2"/>
<rect x="564.04" y="508.04" width="25.02" height="25.13" rx="2.2"/>
<rect x="590.86" y="508.04" width="25.02" height="25.13" rx="2.2"/>
<rect x="617.69" y="508.04" width="25.02" height="25.13" rx="2.2"/>
<rect x="644.51" y="508.04" width="25.02" height="25.13" rx="2.2"/>
<rect x="671.34" y="508.04" width="25.02" height="25.13" rx="2.2"/>
<rect x="698.16" y="508.04" width="25.02" height="25.13" rx="2.2"/>
<rect x="724.99" y="508.04" width="25.02" height="25.13" rx="2.2"/>
<rect x="751.81" y="508.04" width="25.02" height="25.13" rx="2.2"/>
<rect x="778.64" y="508.04" width="25.02" height="25.13" rx="2.2"/>
<rect x="805.46" y="508.04" width="25.02" height="25.13" rx="2.2"/>
<rect x="832.29" y="508.04" width="25.02" height="25.13" rx="2.2"/>
<rect x="859.12" y="508.04" width="25.02" height="25.13" rx="2.2"/>
<rect x="885.94" y="508.04" width="25.02" height="25.13" rx="2.2"/>
<rect x="912.77" y="508.04" width="25.02" height="25.13" rx="2.2"/>
<rect x="108.02" y="534.77" width="25.02" height="25.13" rx="2.2"/>
<rect x="134.84" y="534.77" width="25.02" height="25.13" rx="2.2"/>
<rect x="161.66" y="534.77" width="25.02" height="25.13" rx="2.2"/>
<rect x="188.49" y="534.77" width="25.02" height="25.13" rx="2.2"/>
<rect x="215.31" y="534.77" width="25.02" height="25.13" rx="2.2"/>
<rect x="242.14" y="534.77" width="25.02" height="25.13" rx="2.2"/>
<rect x="268.96" y="534.77" width="25.02" height="25.13" rx="2.2"/>
<rect x="295.79" y="534.77" width="25.02" height="25.13" rx="2.2"/>
<rect x="322.62" y="534.77" width="25.02" height="25.13" rx="2.2"/>
<rect x="349.44" y="534.77" width="25.02" height="25.13" rx="2.2"/>
<rect x="376.26" y="534.77" width="25.02" height="25.13" rx="2.2"/>
<rect x="403.09" y="534.77" width="25.02" height="25.13" rx="2.2"/>
<rect x="429.91" y="534.77" width="25.02" height="25.13" rx="2.2"/>
<rect x="456.74" y="534.77" width="25.02" height="25.13" rx="2.2"/>
<rect x="483.56" y="534.77" width="25.02" height="25.13" rx="2.2"/>
<rect x="510.39" y="534.77" width="25.02" height="25.13" rx="2.2"/>
<rect x="537.22" y="534.77" width="25.02" height="25.13" rx="2.2"/>
<rect x="564.04" y="534.77" width="25.02" height="25.13" rx="2.2"/>
<rect x="590.86" y="534.77" width="25.02" height="25.13" rx="2.2"/>
<rect x="617.69" y="534.77" width="25.02" height="25.13" rx="2.2"/>
<rect x="644.51" y="534.77" width="25.02" height="25.13" rx="2.2"/>
<rect x="671.34" y="534.77" width="25.02" height="25.13" rx="2.2"/>
<rect x="698.16" y="534.77" width="25.02" height="25.13" rx="2.2"/>
<rect x="724.99" y="534.77" width="25.02" height="25.13" rx="2.2"/>
<rect x="751.81" y="534.77" width="25.02" height="25.13" rx="2.2"/>
<rect x="778.64" y="534.77" width="25.02" height="25.13" rx="2.2"/>
<rect x="805.46" y="534.77" width="25.02" height="25.13" rx="2.2"/>
<rect x="832.29" y="534.77" width="25.02" height="25.13" rx="2.2"/>
<rect x="859.12" y="534.77" width="25.02" height="25.13" rx="2.2"/>
<rect x="885.94" y="534.77" width="25.02" height="25.13" rx="2.2"/>
<rect x="912.77" y="534.77" width="25.02" height="25.13" rx="2.2"/>
<rect x="108.02" y="561.50" width="25.02" height="25.13" rx="2.2"/>
<rect x="134.84" y="561.50" width="25.02" height="25.13" rx="2.2"/>
<rect x="161.66" y="561.50" width="25.02" height="25.13" rx="2.2"/>
<rect x="188.49" y="561.50" width="25.02" height="25.13" rx="2.2"/>
<rect x="215.31" y="561.50" width="25.02" height="25.13" rx="2.2"/>
<rect x="242.14" y="561.50" width="25.02" height="25.13" rx="2.2"/>
<rect x="268.96" y="561.50" width="25.02" height="25.13" rx="2.2"/>
<rect x="295.79" y="561.50" width="25.02" height="25.13" rx="2.2"/>
<rect x="322.62" y="561.50" width="25.02" height="25.13" rx="2.2"/>
<rect x="349.44" y="561.50" width="25.02" height="25.13" rx="2.2"/>
<rect x="376.26" y="561.50" width="25.02" height="25.13" rx="2.2"/>
<rect x="403.09" y="561.50" width="25.02" height="25.13" rx="2.2"/>
<rect x="429.91" y="561.50" width="25.02" height="25.13" rx="2.2"/>
<rect x="456.74" y="561.50" width="25.02" height="25.13" rx="2.2"/>
<rect x="483.56" y="561.50" width="25.02" height="25.13" rx="2.2"/>
<rect x="510.39" y="561.50" width="25.02" height="25.13" rx="2.2"/>
<rect x="537.22" y="561.50" width="25.02" height="25.13" rx="2.2"/>
<rect x="564.04" y="561.50" width="25.02" height="25.13" rx="2.2"/>
<rect x="590.86" y="561.50" width="25.02" height="25.13" rx="2.2"/>
<rect x="617.69" y="561.50" width="25.02" height="25.13" rx="2.2"/>
<rect x="644.51" y="561.50" width="25.02" height="25.13" rx="2.2"/>
<rect x="671.34" y="561.50" width="25.02" height="25.13" rx="2.2"/>
<rect x="698.16" y="561.50" width="25.02" height="25.13" rx="2.2"/>
<rect x="724.99" y="561.50" width="25.02" height="25.13" rx="2.2"/>
<rect x="751.81" y="561.50" width="25.02" height="25.13" rx="2.2"/>
<rect x="778.64" y="561.50" width="25.02" height="25.13" rx="2.2"/>
<rect x="805.46" y="561.50" width="25.02" height="25.13" rx="2.2"/>
<rect x="832.29" y="561.50" width="25.02" height="25.13" rx="2.2"/>
<rect x="859.12" y="561.50" width="25.02" height="25.13" rx="2.2"/>
<rect x="885.94" y="561.50" width="25.02" height="25.13" rx="2.2"/>
<rect x="912.77" y="561.50" width="25.02" height="25.13" rx="2.2"/>
</g>
<rect x="0.77" y="26.92" width="105.60" height="25.58" rx="1.8" fill="#323232" stroke="#4a4a4a" stroke-width="1.45"/>
<rect x="0.77" y="53.65" width="105.60" height="25.58" rx="1.8" fill="#323232" stroke="#4a4a4a" stroke-width="1.45"/>
<rect x="0.77" y="80.38" width="105.60" height="25.58" rx="1.8" fill="#323232" stroke="#4a4a4a" stroke-width="1.45"/>
<rect x="0.77" y="107.11" width="105.60" height="25.58" rx="1.8" fill="#323232" stroke="#4a4a4a" stroke-width="1.45"/>
<rect x="0.77" y="133.84" width="105.60" height="25.58" rx="1.8" fill="#323232" stroke="#4a4a4a" stroke-width="1.45"/>
<rect x="0.77" y="160.57" width="105.60" height="25.58" rx="1.8" fill="#323232" stroke="#4a4a4a" stroke-width="1.45"/>
<rect x="0.77" y="187.31" width="105.60" height="25.58" rx="1.8" fill="#323232" stroke="#1f5a58" stroke-width="1.45"/>
<rect x="0.77" y="214.04" width="105.60" height="25.58" rx="1.8" fill="#323232" stroke="#1f5a58" stroke-width="1.45"/>
<rect x="0.77" y="240.76" width="105.60" height="25.58" rx="1.8" fill="#323232" stroke="#1f5a58" stroke-width="1.45"/>
<rect x="0.77" y="267.50" width="105.60" height="25.58" rx="1.8" fill="#323232" stroke="#1f5a58" stroke-width="1.45"/>
<rect x="0.77" y="294.23" width="105.60" height="25.58" rx="1.8" fill="#323232" stroke="#1f5a58" stroke-width="1.45"/>
<rect x="0.77" y="320.96" width="105.60" height="25.58" rx="1.8" fill="#323232" stroke="#1f5a58" stroke-width="1.45"/>
<rect x="0.77" y="347.69" width="105.60" height="25.58" rx="1.8" fill="#323232" stroke="#1f5a58" stroke-width="1.45"/>
<rect x="0.77" y="374.42" width="105.60" height="25.58" rx="1.8" fill="#323232" stroke="#1f5a58" stroke-width="1.45"/>
<rect x="0.77" y="401.15" width="105.60" height="25.58" rx="1.8" fill="#323232" stroke="#1f5a58" stroke-width="1.45"/>
<rect x="0.77" y="427.88" width="105.60" height="25.58" rx="1.8" fill="#323232" stroke="#1f5a58" stroke-width="1.45"/>
<rect x="0.77" y="454.61" width="105.60" height="25.58" rx="1.8" fill="#323232" stroke="#1f5a58" stroke-width="1.45"/>
<rect x="0.77" y="481.34" width="105.60" height="25.58" rx="1.8" fill="#323232" stroke="#1f5a58" stroke-width="1.45"/>
<rect x="0.77" y="508.07" width="105.60" height="25.58" rx="1.8" fill="#323232" stroke="#1f5a58" stroke-width="1.45"/>
<rect x="0.77" y="534.80" width="105.60" height="25.58" rx="1.8" fill="#323232" stroke="#1f5a58" stroke-width="1.45"/>
<text x="15.60" y="47.05">1</text>
<text x="15.60" y="73.78">2</text>
<text x="2.00" y="92.81" font-size="12.4">St</text>
<text x="15.60" y="100.51">1</text>
<text x="103.90" y="100.51" text-anchor="end">L</text>
<text x="2.00" y="119.54" font-size="12.4">St</text>
<text x="15.60" y="127.24">1</text>
<text x="103.90" y="127.24" text-anchor="end">R</text>
<text x="2.00" y="146.27" font-size="12.4">St</text>
<text x="15.60" y="153.97">2</text>
<text x="103.90" y="153.97" text-anchor="end">L</text>
<text x="2.00" y="173.00" font-size="12.4">St</text>
<text x="15.60" y="180.70">2</text>
<text x="103.90" y="180.70" text-anchor="end">R</text>
<text x="15.90" y="206.03" font-size="19">Wedge 1</text>
<text x="15.60" y="234.16">2</text>
<text x="15.60" y="260.89">3</text>
<text x="15.60" y="287.62">4</text>
<text x="15.60" y="314.35">5</text>
<text x="15.60" y="341.08">6</text>
<text x="15.60" y="367.81">7</text>
<text x="15.60" y="394.54">8</text>
<text x="2.00" y="413.57" font-size="12.4">St</text>
<text x="15.60" y="421.27">1</text>
<text x="103.90" y="421.27" text-anchor="end">L</text>
<text x="2.00" y="440.30" font-size="12.4">St</text>
<text x="15.60" y="448.00">1</text>
<text x="103.90" y="448.00" text-anchor="end">R</text>
<text x="2.00" y="467.03" font-size="12.4">St</text>
<text x="15.60" y="474.73">2</text>
<text x="103.90" y="474.73" text-anchor="end">L</text>
<text x="2.00" y="493.76" font-size="12.4">St</text>
<text x="15.60" y="501.46">2</text>
<text x="103.90" y="501.46" text-anchor="end">R</text>
<text x="2.00" y="520.49" font-size="12.4">St</text>
<text x="15.60" y="528.19">3</text>
<text x="103.90" y="528.19" text-anchor="end">L</text>
<text x="2.00" y="547.22" font-size="12.4">St</text>
<text x="15.60" y="554.92">3</text>
<text x="103.90" y="554.92" text-anchor="end">R</text>
<text x="120.93" y="18.10" font-size="13.2" text-anchor="middle" fill="#3a3a3a">1</text>
<text x="147.75" y="18.10" font-size="13.2" text-anchor="middle" fill="#3a3a3a">2</text>
<text x="174.58" y="18.10" font-size="13.2" text-anchor="middle" fill="#3a3a3a">3</text>
<text x="201.40" y="18.10" font-size="13.2" text-anchor="middle" fill="#3a3a3a">4</text>
<text x="228.23" y="18.10" font-size="13.2" text-anchor="middle" fill="#3a3a3a">5</text>
<text x="255.05" y="18.10" font-size="13.2" text-anchor="middle" fill="#3a3a3a">6</text>
<text x="281.88" y="18.10" font-size="13.2" text-anchor="middle" fill="#3a3a3a">7</text>
<text x="308.70" y="18.10" font-size="13.2" text-anchor="middle" fill="#3a3a3a">8</text>
<text x="335.53" y="18.10" font-size="13.2" text-anchor="middle" fill="#3a3a3a">9</text>
<text x="362.35" y="18.10" font-size="13.2" text-anchor="middle" fill="#3a3a3a">10</text>
<text x="389.18" y="18.10" font-size="13.2" text-anchor="middle" fill="#3a3a3a">11</text>
<text x="416.00" y="18.10" font-size="13.2" text-anchor="middle" fill="#3a3a3a">12</text>
<text x="442.83" y="18.10" font-size="13.2" text-anchor="middle" fill="#3a3a3a">13</text>
<text x="469.65" y="18.10" font-size="13.2" text-anchor="middle" fill="#3a3a3a">14</text>
<text x="496.48" y="18.10" font-size="13.2" text-anchor="middle" fill="#3a3a3a">15</text>
<text x="523.30" y="18.10" font-size="13.2" text-anchor="middle" fill="#3a3a3a">16</text>
<text x="550.13" y="18.10" font-size="13.2" text-anchor="middle" fill="#3a3a3a">17</text>
<text x="576.95" y="18.10" font-size="13.2" text-anchor="middle" fill="#3a3a3a">18</text>
<text x="603.78" y="18.10" font-size="13.2" text-anchor="middle" fill="#3a3a3a">19</text>
<text x="630.60" y="18.10" font-size="13.2" text-anchor="middle" fill="#3a3a3a">20</text>
<text x="657.43" y="18.10" font-size="13.2" text-anchor="middle" fill="#3a3a3a">21</text>
<text x="684.25" y="18.10" font-size="13.2" text-anchor="middle" fill="#3a3a3a">22</text>
<text x="711.08" y="18.10" font-size="13.2" text-anchor="middle" fill="#3a3a3a">23</text>
<text x="737.90" y="18.10" font-size="13.2" text-anchor="middle" fill="#3a3a3a">24</text>
<text x="764.73" y="18.10" font-size="13.2" text-anchor="middle" fill="#3a3a3a">25</text>
<text x="791.55" y="18.10" font-size="13.2" text-anchor="middle" fill="#3a3a3a">26</text>
<text x="818.38" y="18.10" font-size="13.2" text-anchor="middle" fill="#3a3a3a">27</text>
<text x="845.20" y="18.10" font-size="13.2" text-anchor="middle" fill="#3a3a3a">28</text>
<text x="872.03" y="18.10" font-size="13.2" text-anchor="middle" fill="#3a3a3a">29</text>
<text x="898.85" y="18.10" font-size="13.2" text-anchor="middle" fill="#3a3a3a">30</text>
<text x="925.68" y="18.10" font-size="13.2" text-anchor="middle" fill="#3a3a3a">31</text>
  </svg>
  <div class="abs" style="left:0;top:551px;width:899px;height:1px;background:rgba(39,39,39,0.5);"></div>
</div>

<!-- bottom bar -->
<svg class="abs" style="left:13px;top:743px" width="93" height="40"><defs><linearGradient id="pg1" x1="0" y1="0" x2="0" y2="1"><stop offset="0.5" stop-color="#474747"/><stop offset="0.5" stop-color="#424242"/></linearGradient></defs><rect x="1.20" y="1.00" width="89.70" height="36.00" rx="18.00" fill="#3e3e3e"/><rect x="3.80" y="3.60" width="84.50" height="30.80" rx="15.40" fill="#5b5b5b"/><rect x="5.60" y="5.40" width="80.90" height="27.20" rx="13.60" fill="url(#pg1)"/></svg>
<div class="abs ptxt" style="left:14.3px;">Patch</div>
<svg class="abs" style="left:932px;top:743px" width="93" height="40"><defs><linearGradient id="pg2" x1="0" y1="0" x2="0" y2="1"><stop offset="0.5" stop-color="#474747"/><stop offset="0.5" stop-color="#424242"/></linearGradient></defs><rect x="1.30" y="1.00" width="89.70" height="36.00" rx="18.00" fill="#3e3e3e"/><rect x="3.90" y="3.60" width="84.50" height="30.80" rx="15.40" fill="#5b5b5b"/><rect x="5.70" y="5.40" width="80.90" height="27.20" rx="13.60" fill="url(#pg2)"/></svg>
<div class="abs ptxt" style="left:933.2px;">Patch</div>
<div class="abs" style="left:0;top:750px;width:1037px;text-align:center;font-size:18px;line-height:24px;color:#3d3d3d;">Navigate mode</div>

<!-- modal -->
<div id="modal">
  <div class="abs" style="left:0;top:15.3px;width:119px;height:1.6px;background:#cfcfcf;"></div>
  <div class="abs" style="left:328px;top:15.3px;width:119px;height:1.6px;background:#cfcfcf;"></div>
  <div class="abs" style="left:119px;top:5px;width:209px;text-align:center;font-weight:bold;font-size:17.7px;line-height:23px;color:#c4c4c4;">Unknown 5 Information</div>
  <div class="abs" style="left:22.5px;top:55px;font-size:23.2px;line-height:26.6px;white-space:nowrap;">Assignments:<br>Ip Direct Output, NoName</div>
  <svg class="abs" style="left:367px;top:2px" width="74" height="39"><defs><linearGradient id="pg3" x1="0" y1="0" x2="0" y2="1"><stop offset="0.47" stop-color="#5a5a5a"/><stop offset="0.47" stop-color="#444444"/></linearGradient></defs><rect x="1.50" y="1.70" width="70.90" height="35.30" rx="17.65" fill="#444444"/><rect x="3.80" y="4.00" width="66.30" height="30.70" rx="15.35" fill="#f00000"/><rect x="6.00" y="6.20" width="61.90" height="26.30" rx="13.15" fill="url(#pg3)"/></svg>
  <div class="abs" style="left:368.5px;top:3.7px;width:70.9px;height:35.3px;line-height:36.4px;text-align:center;font-weight:bold;font-size:18.4px;color:#fff;">Close</div>
  <svg class="abs" style="left:378px;top:52px" width="50" height="50">
    <circle cx="24.4" cy="24.4" r="22.5" fill="#005cd2"/>
    <path d="M4.60 24.40 A19.8 19.8 0 0 1 44.20 24.40 Z" fill="#00a8e8" stroke="#00a8e8" stroke-width="0.8" stroke-linejoin="round"/>
    <rect x="20.6" y="13.0" width="7.4" height="4.7" fill="#fff"/>
    <rect x="20.6" y="20.2" width="7.4" height="18.3" fill="#fff"/>
  </svg>
  <div class="abs" style="left:0;top:152.8px;width:447px;text-align:center;font-size:16.9px;line-height:20px;">Stereo Link</div>
  <svg class="abs" style="left:187px;top:171px" width="74" height="39"><defs><linearGradient id="pg4" x1="0" y1="0" x2="0" y2="1"><stop offset="0.5" stop-color="#969696"/><stop offset="0.5" stop-color="#787878"/></linearGradient></defs><rect x="1.20" y="1.70" width="70.80" height="35.10" rx="17.55" fill="#626262"/><rect x="3.50" y="4.00" width="66.20" height="30.50" rx="15.25" fill="#ffffff"/><rect x="5.70" y="6.20" width="61.80" height="26.10" rx="13.05" fill="url(#pg4)"/></svg>
  <div class="abs" style="left:0;top:207.5px;width:447px;text-align:center;font-size:14.3px;line-height:18px;">Stereo Link also affects Output 6</div>
</div>
</body>
</html>
